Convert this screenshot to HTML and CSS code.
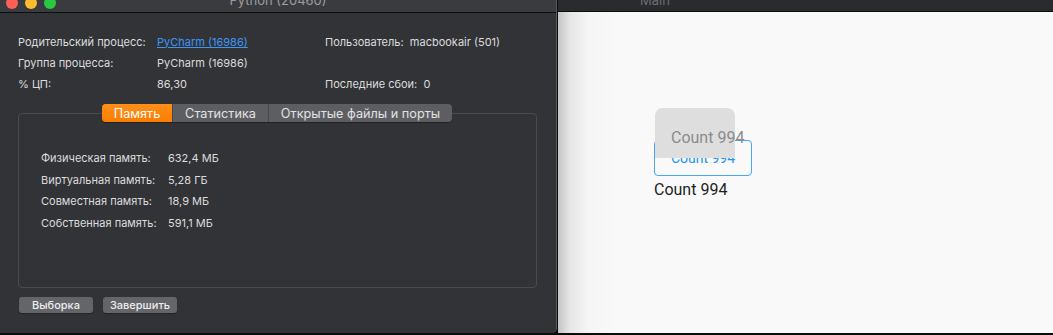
FILE: index.html
```html
<!DOCTYPE html>
<html lang="ru">
<head>
    <meta charset="UTF-8">
    <title>Python (20460)</title>
    <link rel="stylesheet" href="styles.css">
</head>
<body>
    <div class="proc-window">
        <div class="titlebar">
            <div class="lights">
                <span class="light red"></span>
                <span class="light yellow"></span>
                <span class="light green"></span>
            </div>
            <div class="title">Python (20460)</div>
        </div>

        <div class="info">
            <div class="info-col">
                <div class="row"><span class="label">Родительский процесс:</span><a href="#" class="link">PyCharm (16986)</a></div>
                <div class="row"><span class="label">Группа процесса:</span><span>PyCharm (16986)</span></div>
                <div class="row"><span class="label">% ЦП:</span><span>86,30</span></div>
            </div>
            <div class="info-col right">
                <div class="row">Пользователь:&nbsp; macbookair (501)</div>
                <div class="row"></div>
                <div class="row">Последние сбои:&nbsp; 0</div>
            </div>
        </div>

        <div class="tabbox">
            <div class="tabs">
                <span class="tab active">Память</span>
                <span class="tab">Статистика</span>
                <span class="tab">Открытые файлы и порты</span>
            </div>
            <div class="mem-list">
                <div class="row"><span class="mem-label">Физическая память:</span><span>632,4 МБ</span></div>
                <div class="row"><span class="mem-label">Виртуальная память:</span><span>5,28 ГБ</span></div>
                <div class="row"><span class="mem-label">Совместная память:</span><span>18,9 МБ</span></div>
                <div class="row"><span class="mem-label">Собственная память:</span><span>591,1 МБ</span></div>
            </div>
        </div>

        <div class="actions">
            <button class="btn">Выборка</button>
            <button class="btn">Завершить</button>
        </div>
    </div>

    <div class="main-window">
        <div class="main-titlebar"><span class="main-title">Main</span></div>
        <div class="main-content">
            <div class="counter">
                <div class="outlined">Count 994</div>
                <div class="pressed">Count 994</div>
                <div class="plain">Count 994</div>
            </div>
        </div>
    </div>
</body>
</html>
```

FILE: styles.css
```css
body {
    margin: 0;
    width: 1053px;
    height: 335px;
    overflow: hidden;
    background-color: #0b0b0c;
    display: flex;
    font-family: Inter, Roboto, "Noto Sans", sans-serif;
}

.proc-window {
    width: 556px;
    height: 333px;
    background-color: #323337;
    border-right: 1px solid #5a5b5f;
    border-bottom-right-radius: 5px;
    color: #dcdcdd;
    font-size: 11px;
    display: flex;
    flex-direction: column;
}

.titlebar {
    height: 12px;
    background-color: #3a3b3f;
    border-bottom: 1px solid #0e0e10;
    overflow: hidden;
    position: relative;
}

.lights {
    display: flex;
    gap: 7px;
    margin: -3px 0 0 6px;
}

.light {
    width: 12px;
    height: 12px;
    border-radius: 50%;
}

.red { background-color: #fe5f57; }
.yellow { background-color: #febc2e; }
.green { background-color: #28c840; }

.title {
    position: absolute;
    top: -8px;
    left: 0;
    right: 0;
    text-align: center;
    font-size: 13px;
    color: #9c9da0;
}

.info {
    display: flex;
    padding: 18px 0 0 18px;
}

.info-col {
    flex: none;
    width: 307px;
}

.info .row {
    height: 21px;
    display: flex;
    align-items: center;
    white-space: nowrap;
}

.label {
    flex: none;
    width: 139px;
}

.link {
    color: #3d96f5;
    text-decoration: underline;
}

.tabbox {
    margin: 19px 19px 0 18px;
    height: 173px;
    border: 1px solid #4a4b4f;
    border-radius: 4px;
    display: flex;
    flex-direction: column;
}

.tabs {
    display: flex;
    margin: -10px 0 0 83px;
    width: 350px;
    height: 18px;
    border-radius: 4px;
    overflow: hidden;
    background-color: #5d5e62;
    box-shadow: 0 1px 1px rgba(0, 0, 0, 0.35);
    font-size: 12.7px;
}

.tab {
    display: flex;
    align-items: center;
    justify-content: center;
    color: #e2e2e3;
    border-left: 1px solid #47484c;
    white-space: nowrap;
}

.tab:nth-child(1) { width: 70px; border-left: none; }
.tab:nth-child(2) { width: 95px; }
.tab:nth-child(3) { flex: 1; }

.tab.active {
    background: linear-gradient(#ff8f1a, #fb7d00);
    color: #ffffff;
}

.mem-list {
    padding: 25px 0 0 22px;
}

.mem-list .row {
    height: 21.7px;
    display: flex;
    align-items: center;
    white-space: nowrap;
}

.mem-label {
    flex: none;
    width: 127px;
}

.actions {
    display: flex;
    gap: 10px;
    margin: 9px 0 0 19px;
}

.btn {
    width: 74px;
    height: 16px;
    padding: 0;
    border: none;
    border-radius: 3px;
    background-color: #646569;
    color: #ececed;
    font-family: inherit;
    font-size: 11px;
    font-weight: 500;
    box-shadow: 0 1px 1px rgba(0, 0, 0, 0.3);
}

.main-window {
    flex: 1;
    margin-left: 1px;
    display: flex;
    flex-direction: column;
}

.main-titlebar {
    height: 11px;
    background-color: #2a2b2e;
    border-bottom: 1px solid #0e0e10;
    overflow: hidden;
}

.main-title {
    display: block;
    margin: -8px 0 0 82px;
    font-size: 13px;
    color: #6b6c70;
}

.main-content {
    flex: 1;
    background: linear-gradient(to right, #c4c4c4 0, #e6e6e6 12px, #f5f5f5 30px, #f9f9f9 60px);
    margin-bottom: 2px;
    padding: 96px 0 0 96px;
    font-family: Roboto, sans-serif;
}

.counter {
    position: relative;
    padding-top: 32px;
}

.outlined {
    width: 96px;
    height: 34px;
    border: 1px solid #48a6f5;
    border-radius: 4px;
    color: #2196f3;
    font-size: 14px;
    display: flex;
    align-items: center;
    justify-content: center;
}

.pressed {
    position: absolute;
    top: 0;
    left: 1px;
    width: 80px;
    height: 50px;
    background-color: #dedede;
    border-radius: 8px 8px 0 0;
    color: #8b8b8b;
    font-size: 16px;
    line-height: 60px;
    padding-left: 16px;
    box-sizing: border-box;
    white-space: nowrap;
}

.plain {
    margin-top: 4px;
    font-size: 16px;
    color: #1e1e1e;
}
```
